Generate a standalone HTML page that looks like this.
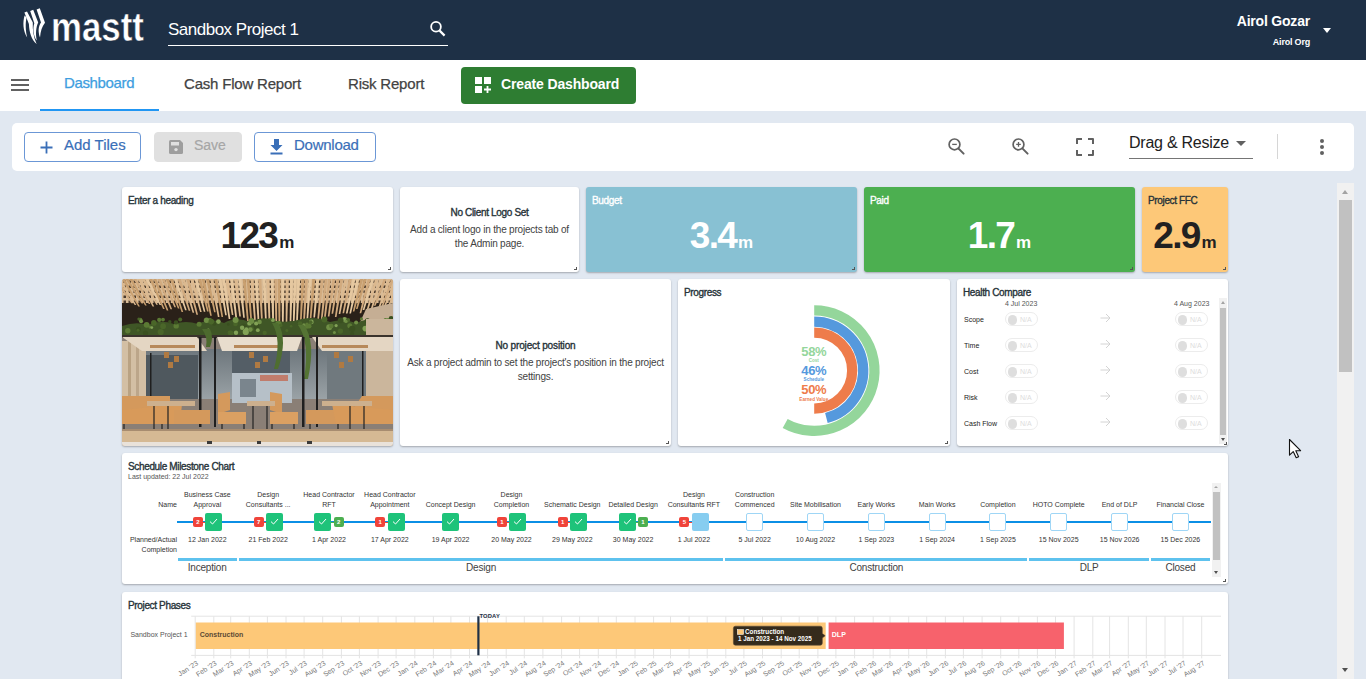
<!DOCTYPE html>
<html><head><meta charset="utf-8">
<style>
*{box-sizing:border-box;margin:0;padding:0}
html,body{width:1366px;height:679px;overflow:hidden;background:#e1e8f1;font-family:"Liberation Sans",sans-serif;color:#212121}
.a{position:absolute}
.nw{white-space:nowrap}
#hdr{left:0;top:0;width:1366px;height:60px;background:#1e3046}
#nav{left:0;top:60px;width:1366px;height:51px;background:#fff}
.tab{position:absolute;font-size:15px;color:#424242;white-space:nowrap;-webkit-text-stroke:0.25px currentColor}
#tb{left:12px;top:123px;width:1342px;height:48px;background:#fff;border-radius:5px}
.btn{position:absolute;top:9px;height:30px;border:1px solid #6b97d6;border-radius:4px;color:#3a6fb8;font-size:15px;-webkit-text-stroke:0.2px currentColor}
.tile{position:absolute;background:#fff;border-radius:3px;box-shadow:0 1px 2px rgba(0,0,0,.28)}
.tt{position:absolute;left:6px;top:8px;font-size:10px;font-weight:normal;-webkit-text-stroke:0.35px currentColor;letter-spacing:-0.35px;color:#263238;white-space:nowrap}
.rh{position:absolute;right:2px;bottom:2px;width:3.5px;height:3.5px;border-right:1.5px solid #555;border-bottom:1.5px solid #555}
.big{position:absolute;left:0;width:100%;text-align:center;font-weight:bold;white-space:nowrap}
.big b{font-size:37px;letter-spacing:-1.7px}
.big i{font-style:normal;font-size:17px;letter-spacing:0;margin-left:2px}
</style></head><body>
<!-- HEADER -->
<div id="hdr" class="a">
  <svg class="a" style="left:20px;top:6px" width="30" height="40" viewBox="0 0 30 40">
    <path d="M4.4 6.6 L7 5.4 L12.8 16.4 C12.4 24 13.6 31 16.6 38 C11.4 34 9.2 26 8.9 18 Z" fill="#fff"/>
    <path d="M4.6 9.5 C2.6 16 2.9 25 7.2 31.5 C5.6 25 5.2 17 6.6 11.5 Z" fill="#fff"/>
    <path d="M10.2 5 L13.2 3.8 L18.2 16.5 C16 21 15.4 28 16.8 34.6 C13.2 29.5 12.6 22 14.3 17.2 Z" fill="#fff"/>
    <path d="M16.6 3.4 L19.8 2.2 L25 16.8 C22 20.6 20.6 25 20 31.6 C18 26 18.2 20.5 21 16.6 Z" fill="#fff"/>
  </svg>
  <div class="a nw" style="left:51px;top:4.5px;font-size:40px;font-weight:bold;color:#fff;-webkit-text-stroke:0.5px #1e3046;transform:scaleX(0.87);transform-origin:0 0;letter-spacing:0">mastt</div>
  <div class="a nw" style="left:168px;top:20px;font-size:17px;color:#fff;letter-spacing:-0.5px">Sandbox Project 1</div>
  <div class="a" style="left:168px;top:45px;width:280px;height:1.3px;background:#fff"></div>
  <svg class="a" style="left:429px;top:21px" width="18" height="17" viewBox="0 0 18 17"><circle cx="7" cy="5.8" r="4.85" stroke="#fff" stroke-width="1.8" fill="none"/><path d="M10.6 9.6 L15.6 14.6" stroke="#fff" stroke-width="2.2"/></svg>
  <div class="a nw" style="right:56px;top:13px;font-size:14px;font-weight:bold;color:#fff;letter-spacing:-0.2px">Airol Gozar</div>
  <div class="a nw" style="right:56px;top:37px;font-size:9px;font-weight:bold;color:#fff;letter-spacing:-0.2px">Airol Org</div>
  <div class="a" style="left:1323px;top:28px;width:0;height:0;border-left:4.5px solid transparent;border-right:4.5px solid transparent;border-top:5px solid #fff"></div>
</div>
<!-- NAV -->
<div id="nav" class="a">
  <div class="a" style="left:11px;top:19px;width:18px;height:2px;background:#616161"></div>
  <div class="a" style="left:11px;top:24px;width:18px;height:2px;background:#616161"></div>
  <div class="a" style="left:11px;top:29px;width:18px;height:2px;background:#616161"></div>
  <div class="tab" style="left:64px;top:14px;color:#3d9ee0;letter-spacing:-0.35px">Dashboard</div>
  <div class="a" style="left:40px;top:48.7px;width:119px;height:2.2px;background:#2196f3"></div>
  <div class="tab" style="left:184px;top:15px;letter-spacing:-0.2px">Cash Flow Report</div>
  <div class="tab" style="left:348px;top:15px;letter-spacing:-0.2px">Risk Report</div>
  <div class="a" style="left:461px;top:7px;width:175px;height:37px;background:#2e7d32;border-radius:4px">
    <svg class="a" style="left:14px;top:10px" width="16" height="16" viewBox="0 0 16 16"><rect x="0" y="0" width="7" height="7" fill="#fff"/><rect x="9" y="0" width="7" height="7" fill="#fff"/><rect x="0" y="9" width="7" height="7" fill="#fff"/><path d="M12.5 9 V16 M9 12.5 H16" stroke="#fff" stroke-width="1.8"/></svg>
    <div class="a nw" style="left:40px;top:9px;font-size:14px;font-weight:bold;color:#fff;letter-spacing:-0.15px">Create Dashboard</div>
  </div>
</div>
<!-- TOOLBAR -->
<div id="tb" class="a">
  <div class="btn" style="left:12px;width:117px">
    <svg class="a" style="left:15px;top:8px" width="13" height="13" viewBox="0 0 13 13"><path d="M6.5 0.5 V12.5 M0.5 6.5 H12.5" stroke="#3a6fb8" stroke-width="1.8"/></svg>
    <div class="a nw" style="left:39px;top:3px;letter-spacing:0">Add Tiles</div>
  </div>
  <div class="btn" style="left:142px;width:88px;border-color:#e0e0e0;background:#e0e0e0;color:#a6a6a6">
    <svg class="a" style="left:13px;top:6px" width="16" height="16" viewBox="0 0 16 16"><path d="M1 2.5 Q1 1 2.5 1 H12 L15 4 V13.5 Q15 15 13.5 15 H2.5 Q1 15 1 13.5 Z" fill="#9e9e9e"/><rect x="3" y="3" width="8" height="3.5" fill="#e0e0e0"/><circle cx="8" cy="10.6" r="1.7" fill="#e0e0e0"/></svg>
    <div class="a nw" style="left:39px;top:4px;font-size:14px;letter-spacing:0">Save</div>
  </div>
  <div class="btn" style="left:242px;width:122px">
    <svg class="a" style="left:15px;top:6px" width="13" height="16" viewBox="0 0 13 16"><path d="M4 0 H9 V6 H12.5 L6.5 12 L0.5 6 H4 Z" fill="#3a6fb8"/><rect x="0.5" y="13.5" width="12" height="2" fill="#3a6fb8"/></svg>
    <div class="a nw" style="left:39px;top:3px;letter-spacing:-0.25px">Download</div>
  </div>
  <svg class="a" style="left:935px;top:15px" width="19" height="18" viewBox="0 0 19 18"><circle cx="7.5" cy="6.4" r="5.4" stroke="#616161" stroke-width="1.7" fill="none"/><path d="M11.6 10.6 L16.6 15.6" stroke="#616161" stroke-width="2" stroke-linecap="round"/><path d="M5.2 6.4 H9.8" stroke="#616161" stroke-width="1.3"/></svg>
  <svg class="a" style="left:999px;top:15px" width="19" height="18" viewBox="0 0 19 18"><circle cx="7.5" cy="6.4" r="5.4" stroke="#616161" stroke-width="1.7" fill="none"/><path d="M11.6 10.6 L16.6 15.6" stroke="#616161" stroke-width="2" stroke-linecap="round"/><path d="M5.2 6.4 H9.8 M7.5 4.1 V8.7" stroke="#616161" stroke-width="1.3"/></svg>
  <svg class="a" style="left:1064px;top:15px" width="19" height="18" viewBox="0 0 19 18"><path d="M1 6 V1 H6 M12 1 H17 V6 M17 12 V17 H12 M6 17 H1 V12" stroke="#616161" stroke-width="2" stroke-linejoin="round" fill="none"/></svg>
  <div class="a nw" style="left:1117px;top:11px;font-size:16px;color:#212121;letter-spacing:-0.25px">Drag &amp; Resize</div>
  <div class="a" style="left:1224px;top:18px;width:0;height:0;border-left:5px solid transparent;border-right:5px solid transparent;border-top:5px solid #616161"></div>
  <div class="a" style="left:1117px;top:35px;width:124px;height:1px;background:#757575"></div>
  <div class="a" style="left:1265px;top:11px;width:1px;height:25px;background:#d6d6d6"></div>
  <div class="a" style="left:1308px;top:16px;width:4px;height:4px;border-radius:2px;background:#616161"></div>
  <div class="a" style="left:1308px;top:22px;width:4px;height:4px;border-radius:2px;background:#616161"></div>
  <div class="a" style="left:1308px;top:28px;width:4px;height:4px;border-radius:2px;background:#616161"></div>
</div>
<!-- TILES -->
<div id="tiles">
  <!-- row 1 -->
  <div class="tile" style="left:122px;top:187px;width:271px;height:85px">
    <div class="tt">Enter a heading</div>
    <div class="big" style="top:28px;color:#212121"><b>123</b><i>m</i></div>
    <div class="rh"></div>
  </div>
  <div class="tile" style="left:400px;top:187px;width:179px;height:85px;text-align:center">
    <div class="a nw" style="left:0;width:100%;top:20px;font-size:10px;-webkit-text-stroke:0.35px #263238;letter-spacing:-0.33px;color:#263238">No Client Logo Set</div>
    <div class="a" style="left:0;width:100%;top:36px;font-size:10px;line-height:14px;letter-spacing:-0.2px;color:#424242">Add a client logo in the projects tab of<br>the Admin page.</div>
    <div class="rh"></div>
  </div>
  <div class="tile" style="left:586px;top:187px;width:271px;height:85px;background:#88c1d3">
    <div class="tt" style="color:#fff">Budget</div>
    <div class="big" style="top:28px;color:#fff"><b>3.4</b><i>m</i></div>
    <div class="rh"></div>
  </div>
  <div class="tile" style="left:864px;top:187px;width:271px;height:85px;background:#4caf50">
    <div class="tt" style="color:#fff">Paid</div>
    <div class="big" style="top:28px;color:#fff"><b>1.7</b><i>m</i></div>
    <div class="rh"></div>
  </div>
  <div class="tile" style="left:1142px;top:187px;width:86px;height:85px;background:#fdc878">
    <div class="tt">Project FFC</div>
    <div class="big" style="top:28px;color:#212121"><b>2.9</b><i>m</i></div>
    <div class="rh"></div>
  </div>
  <!-- row 2 -->
  <div class="tile" style="left:122px;top:279px;width:271px;height:167px;overflow:hidden" id="photo"><svg width="271" height="167" viewBox="0 0 271 167" style="display:block">
<defs>
<linearGradient id="ceil" x1="0" y1="0" x2="0" y2="1"><stop offset="0" stop-color="#cfae88"/><stop offset="1" stop-color="#b98f63"/></linearGradient>
<linearGradient id="win" x1="0" y1="0" x2="0" y2="1"><stop offset="0" stop-color="#6d767c"/><stop offset="1" stop-color="#9aa2a6"/></linearGradient>
<pattern id="slat" width="5" height="10" patternUnits="userSpaceOnUse"><rect width="5" height="10" fill="#d9b68c"/><rect x="3.4" width="1.6" height="10" fill="#6b5038"/></pattern>
<pattern id="grid" width="5" height="5" patternUnits="userSpaceOnUse"><rect width="5" height="5" fill="#d8bb97"/><rect x="1.5" y="1.5" width="2.5" height="2.5" fill="#4a3a2c"/></pattern>
</defs>
<rect width="271" height="167" fill="#8a7f76"/>
<!-- ceiling -->
<rect x="0" y="0" width="271" height="30" fill="url(#grid)"/>
<rect x="0" y="24" width="271" height="24" fill="#2a2119"/>
<path d="M-8.0 0 L-5.0 0 L10.9 24.2 L9.3 24.2 Z" fill="#d2ab7f"/>
<path d="M-4.2 0 L-1.2 0 L14.3 26.0 L12.7 26.0 Z" fill="#dcb98f"/>
<path d="M-0.2 0 L2.8 0 L17.9 27.5 L16.3 27.5 Z" fill="#c9a070"/>
<path d="M3.4 0 L6.4 0 L21.2 24.6 L19.6 24.6 Z" fill="#c9a070"/>
<path d="M7.4 0 L10.4 0 L24.7 26.6 L23.1 26.6 Z" fill="#c9a070"/>
<path d="M11.4 0 L14.4 0 L28.4 25.1 L26.8 25.1 Z" fill="#d2ab7f"/>
<path d="M15.7 0 L18.7 0 L32.2 27.5 L30.6 27.5 Z" fill="#dcb98f"/>
<path d="M19.8 0 L22.8 0 L35.9 25.7 L34.3 25.7 Z" fill="#dcb98f"/>
<path d="M23.5 0 L26.5 0 L39.2 26.0 L37.6 26.0 Z" fill="#e6c8a0"/>
<path d="M27.3 0 L30.3 0 L42.7 29.9 L41.1 29.9 Z" fill="#c9a070"/>
<path d="M31.4 0 L34.4 0 L46.4 31.4 L44.8 31.4 Z" fill="#c9a070"/>
<path d="M35.6 0 L38.6 0 L50.1 30.2 L48.5 30.2 Z" fill="#d2ab7f"/>
<path d="M39.8 0 L42.8 0 L54.0 28.3 L52.4 28.3 Z" fill="#d2ab7f"/>
<path d="M43.7 0 L46.7 0 L57.5 29.6 L55.9 29.6 Z" fill="#c9a070"/>
<path d="M47.9 0 L50.9 0 L61.2 33.1 L59.6 33.1 Z" fill="#c9a070"/>
<path d="M51.8 0 L54.8 0 L64.7 31.2 L63.1 31.2 Z" fill="#e6c8a0"/>
<path d="M55.8 0 L58.8 0 L68.3 31.8 L66.7 31.8 Z" fill="#d2ab7f"/>
<path d="M60.1 0 L63.1 0 L72.2 33.7 L70.6 33.7 Z" fill="#dcb98f"/>
<path d="M64.3 0 L67.3 0 L76.0 35.8 L74.4 35.8 Z" fill="#d2ab7f"/>
<path d="M68.4 0 L71.4 0 L79.7 32.9 L78.1 32.9 Z" fill="#dcb98f"/>
<path d="M72.5 0 L75.5 0 L83.4 32.8 L81.8 32.8 Z" fill="#e6c8a0"/>
<path d="M76.2 0 L79.2 0 L86.7 32.6 L85.1 32.6 Z" fill="#c9a070"/>
<path d="M79.7 0 L82.7 0 L89.8 36.7 L88.2 36.7 Z" fill="#c9a070"/>
<path d="M84.0 0 L87.0 0 L93.7 33.3 L92.1 33.3 Z" fill="#c9a070"/>
<path d="M88.2 0 L91.2 0 L97.5 38.1 L95.9 38.1 Z" fill="#dcb98f"/>
<path d="M92.2 0 L95.2 0 L101.1 38.0 L99.5 38.0 Z" fill="#c9a070"/>
<path d="M96.3 0 L99.3 0 L104.8 36.3 L103.2 36.3 Z" fill="#e6c8a0"/>
<path d="M100.2 0 L103.2 0 L108.3 40.1 L106.7 40.1 Z" fill="#e6c8a0"/>
<path d="M103.6 0 L106.6 0 L111.4 36.1 L109.8 36.1 Z" fill="#dcb98f"/>
<path d="M108.0 0 L111.0 0 L115.3 40.9 L113.7 40.9 Z" fill="#e6c8a0"/>
<path d="M112.0 0 L115.0 0 L118.9 37.4 L117.3 37.4 Z" fill="#dcb98f"/>
<path d="M116.4 0 L119.4 0 L122.8 38.8 L121.2 38.8 Z" fill="#e6c8a0"/>
<path d="M120.7 0 L123.7 0 L126.7 42.1 L125.1 42.1 Z" fill="#c9a070"/>
<path d="M124.5 0 L127.5 0 L130.1 42.4 L128.5 42.4 Z" fill="#c9a070"/>
<path d="M128.5 0 L131.5 0 L133.8 41.6 L132.2 41.6 Z" fill="#dcb98f"/>
<path d="M132.6 0 L135.6 0 L137.4 43.8 L135.8 43.8 Z" fill="#e6c8a0"/>
<path d="M136.4 0 L139.4 0 L140.8 43.1 L139.2 43.1 Z" fill="#d2ab7f"/>
<path d="M140.7 0 L143.7 0 L144.7 42.2 L143.1 42.2 Z" fill="#e6c8a0"/>
<path d="M144.6 0 L147.6 0 L148.3 43.3 L146.7 43.3 Z" fill="#dcb98f"/>
<path d="M148.8 0 L151.8 0 L152.0 46.0 L150.4 46.0 Z" fill="#e6c8a0"/>
<path d="M152.2 0 L155.2 0 L155.1 44.5 L153.5 44.5 Z" fill="#d2ab7f"/>
<path d="M155.7 0 L158.7 0 L158.2 45.0 L156.6 45.0 Z" fill="#c9a070"/>
<path d="M159.5 0 L162.5 0 L161.6 46.9 L160.0 46.9 Z" fill="#e6c8a0"/>
<path d="M163.6 0 L166.6 0 L165.3 42.9 L163.7 42.9 Z" fill="#dcb98f"/>
<path d="M168.0 0 L171.0 0 L169.3 42.6 L167.7 42.6 Z" fill="#e6c8a0"/>
<path d="M171.6 0 L174.6 0 L172.5 44.2 L170.9 44.2 Z" fill="#e6c8a0"/>
<path d="M175.2 0 L178.2 0 L175.8 42.2 L174.2 42.2 Z" fill="#e6c8a0"/>
<path d="M179.4 0 L182.4 0 L179.6 41.9 L178.0 41.9 Z" fill="#c9a070"/>
<path d="M182.9 0 L185.9 0 L182.7 44.0 L181.1 44.0 Z" fill="#d2ab7f"/>
<path d="M186.6 0 L189.6 0 L186.1 40.4 L184.5 40.4 Z" fill="#e6c8a0"/>
<path d="M190.3 0 L193.3 0 L189.4 39.6 L187.8 39.6 Z" fill="#c9a070"/>
<path d="M194.3 0 L197.3 0 L193.0 38.5 L191.4 38.5 Z" fill="#e6c8a0"/>
<path d="M198.7 0 L201.7 0 L196.9 40.7 L195.3 40.7 Z" fill="#d2ab7f"/>
<path d="M202.5 0 L205.5 0 L200.4 40.9 L198.8 40.9 Z" fill="#d2ab7f"/>
<path d="M206.0 0 L209.0 0 L203.5 39.7 L201.9 39.7 Z" fill="#d2ab7f"/>
<path d="M210.3 0 L213.3 0 L207.4 37.6 L205.8 37.6 Z" fill="#d2ab7f"/>
<path d="M214.5 0 L217.5 0 L211.1 34.8 L209.5 34.8 Z" fill="#d2ab7f"/>
<path d="M218.2 0 L221.2 0 L214.5 38.1 L212.9 38.1 Z" fill="#d2ab7f"/>
<path d="M222.4 0 L225.4 0 L218.3 34.9 L216.7 34.9 Z" fill="#dcb98f"/>
<path d="M226.7 0 L229.7 0 L222.1 34.3 L220.5 34.3 Z" fill="#d2ab7f"/>
<path d="M230.5 0 L233.5 0 L225.5 34.5 L223.9 34.5 Z" fill="#e6c8a0"/>
<path d="M234.3 0 L237.3 0 L229.0 34.4 L227.4 34.4 Z" fill="#e6c8a0"/>
<path d="M238.2 0 L241.2 0 L232.4 32.6 L230.8 32.6 Z" fill="#c9a070"/>
<path d="M241.7 0 L244.7 0 L235.6 30.0 L234.0 30.0 Z" fill="#c9a070"/>
<path d="M245.7 0 L248.7 0 L239.2 34.2 L237.6 34.2 Z" fill="#d2ab7f"/>
<path d="M249.1 0 L252.1 0 L242.3 31.0 L240.7 31.0 Z" fill="#e6c8a0"/>
<path d="M253.1 0 L256.1 0 L245.8 32.5 L244.2 32.5 Z" fill="#dcb98f"/>
<path d="M257.3 0 L260.3 0 L249.7 32.2 L248.1 32.2 Z" fill="#dcb98f"/>
<path d="M261.5 0 L264.5 0 L253.5 26.8 L251.9 26.8 Z" fill="#d2ab7f"/>
<path d="M265.8 0 L268.8 0 L257.3 30.4 L255.7 30.4 Z" fill="#dcb98f"/>
<path d="M269.2 0 L272.2 0 L260.4 29.0 L258.8 29.0 Z" fill="#d2ab7f"/>
<path d="M273.1 0 L276.1 0 L263.9 26.2 L262.3 26.2 Z" fill="#dcb98f"/>
<path d="M277.1 0 L280.1 0 L267.5 27.1 L265.9 27.1 Z" fill="#dcb98f"/>
<path d="M244 30 L271 24 V48 H236 Z" fill="#c5ae94"/>
<!-- foliage -->
<path d="M0 47 Q14 42 26 46 Q38 40 52 45 Q64 41 76 45 Q90 38 102 44 Q114 37 128 43 Q142 36 154 42 Q168 44 180 40 Q194 37 208 43 Q222 39 234 44 Q250 37 262 42 L271 41 V57 H0 Z" fill="#3f5626"/>
<circle cx="87.8" cy="41.4" r="2.5" fill="#5b7a34"/>
<circle cx="222.6" cy="40.5" r="2.4" fill="#82a256"/>
<circle cx="58.2" cy="40.4" r="2.0" fill="#4a6629"/>
<circle cx="24.6" cy="45.8" r="2.9" fill="#5b7a34"/>
<circle cx="256.8" cy="49.1" r="2.4" fill="#5b7a34"/>
<circle cx="156.4" cy="45.3" r="3.2" fill="#5b7a34"/>
<circle cx="150.9" cy="41.1" r="2.0" fill="#82a256"/>
<circle cx="31.9" cy="43.9" r="2.8" fill="#4a6629"/>
<circle cx="27.9" cy="48.1" r="1.6" fill="#5b7a34"/>
<circle cx="148.4" cy="40.0" r="1.3" fill="#4a6629"/>
<circle cx="134.5" cy="47.5" r="2.8" fill="#3a5020"/>
<circle cx="158.7" cy="46.3" r="1.8" fill="#4a6629"/>
<circle cx="189.4" cy="42.9" r="2.3" fill="#82a256"/>
<circle cx="134.2" cy="44.5" r="2.1" fill="#82a256"/>
<circle cx="265.6" cy="40.9" r="2.0" fill="#6f8f45"/>
<circle cx="41.2" cy="46.8" r="1.3" fill="#5b7a34"/>
<circle cx="207.2" cy="48.2" r="3.0" fill="#6f8f45"/>
<circle cx="92.2" cy="44.6" r="2.2" fill="#3a5020"/>
<circle cx="18.6" cy="40.5" r="1.7" fill="#5b7a34"/>
<circle cx="16.4" cy="50.2" r="2.5" fill="#3a5020"/>
<circle cx="77.1" cy="45.2" r="2.5" fill="#5b7a34"/>
<circle cx="254.9" cy="44.7" r="2.4" fill="#3a5020"/>
<circle cx="16.0" cy="51.3" r="1.5" fill="#4a6629"/>
<circle cx="107.8" cy="53.7" r="2.2" fill="#4a6629"/>
<circle cx="121.7" cy="47.8" r="3.0" fill="#3a5020"/>
<circle cx="234.1" cy="43.5" r="2.0" fill="#6f8f45"/>
<circle cx="185.0" cy="45.1" r="1.7" fill="#5b7a34"/>
<circle cx="47.8" cy="42.7" r="1.7" fill="#3a5020"/>
<circle cx="225.2" cy="41.9" r="1.8" fill="#4a6629"/>
<circle cx="113.5" cy="44.9" r="2.3" fill="#4a6629"/>
<circle cx="187.1" cy="47.2" r="2.4" fill="#5b7a34"/>
<circle cx="123.8" cy="52.9" r="3.1" fill="#82a256"/>
<circle cx="106.3" cy="45.4" r="1.4" fill="#3a5020"/>
<circle cx="16.9" cy="40.1" r="1.6" fill="#4a6629"/>
<circle cx="29.8" cy="48.6" r="1.4" fill="#82a256"/>
<circle cx="41.0" cy="40.6" r="1.9" fill="#5b7a34"/>
<circle cx="19.1" cy="42.3" r="2.0" fill="#6f8f45"/>
<circle cx="258.9" cy="48.6" r="2.1" fill="#5b7a34"/>
<circle cx="230.1" cy="54.9" r="2.1" fill="#3a5020"/>
<circle cx="84.5" cy="41.3" r="2.7" fill="#6f8f45"/>
<circle cx="129.7" cy="50.1" r="2.2" fill="#4a6629"/>
<circle cx="257.7" cy="47.5" r="1.5" fill="#82a256"/>
<circle cx="247.7" cy="51.1" r="1.8" fill="#5b7a34"/>
<circle cx="188.7" cy="43.2" r="1.9" fill="#4a6629"/>
<circle cx="96.4" cy="42.6" r="2.3" fill="#82a256"/>
<circle cx="89.3" cy="42.6" r="2.8" fill="#4a6629"/>
<circle cx="218.4" cy="52.1" r="2.7" fill="#4a6629"/>
<circle cx="54.2" cy="46.9" r="2.7" fill="#5b7a34"/>
<circle cx="214.1" cy="46.6" r="1.6" fill="#82a256"/>
<circle cx="259.2" cy="46.2" r="3.1" fill="#6f8f45"/>
<circle cx="258.8" cy="44.8" r="1.6" fill="#4a6629"/>
<circle cx="127.4" cy="44.4" r="2.2" fill="#82a256"/>
<circle cx="227.8" cy="46.7" r="2.5" fill="#5b7a34"/>
<circle cx="226.2" cy="40.9" r="2.0" fill="#4a6629"/>
<circle cx="129.5" cy="41.9" r="2.8" fill="#6f8f45"/>
<circle cx="23.5" cy="54.1" r="2.6" fill="#3a5020"/>
<circle cx="108.8" cy="54.1" r="2.6" fill="#4a6629"/>
<circle cx="269.1" cy="39.4" r="2.4" fill="#3a5020"/>
<circle cx="218.6" cy="41.3" r="2.9" fill="#3a5020"/>
<circle cx="178.1" cy="44.6" r="2.3" fill="#4a6629"/>
<circle cx="5.8" cy="51.8" r="2.7" fill="#5b7a34"/>
<circle cx="142.7" cy="53.9" r="2.1" fill="#4a6629"/>
<circle cx="223.9" cy="42.4" r="1.7" fill="#6f8f45"/>
<circle cx="135.8" cy="51.2" r="1.9" fill="#82a256"/>
<circle cx="113.6" cy="41.1" r="3.0" fill="#6f8f45"/>
<circle cx="243.3" cy="49.6" r="2.8" fill="#82a256"/>
<circle cx="114.0" cy="53.7" r="2.2" fill="#82a256"/>
<circle cx="41.1" cy="47.2" r="2.9" fill="#4a6629"/>
<circle cx="164.9" cy="51.4" r="1.5" fill="#4a6629"/>
<circle cx="128.3" cy="50.6" r="2.3" fill="#6f8f45"/>
<circle cx="184.9" cy="47.5" r="2.2" fill="#5b7a34"/>
<circle cx="239.4" cy="39.9" r="1.6" fill="#5b7a34"/>
<circle cx="209.3" cy="47.1" r="2.3" fill="#5b7a34"/>
<circle cx="120.1" cy="48.8" r="2.2" fill="#82a256"/>
<circle cx="54.0" cy="43.4" r="2.2" fill="#3a5020"/>
<circle cx="137.6" cy="43.0" r="2.2" fill="#6f8f45"/>
<circle cx="250.1" cy="53.3" r="1.6" fill="#3a5020"/>
<circle cx="37.2" cy="40.9" r="2.1" fill="#5b7a34"/>
<circle cx="181.9" cy="45.9" r="1.6" fill="#6f8f45"/>
<circle cx="212.4" cy="53.4" r="1.5" fill="#6f8f45"/>
<circle cx="38.7" cy="53.1" r="3.1" fill="#4a6629"/>
<circle cx="202.4" cy="40.5" r="3.0" fill="#4a6629"/>
<circle cx="268.3" cy="52.3" r="1.5" fill="#3a5020"/>
<circle cx="269.4" cy="45.5" r="2.0" fill="#6f8f45"/>
<circle cx="86.3" cy="50.6" r="1.2" fill="#82a256"/>
<circle cx="124.3" cy="50.3" r="2.0" fill="#82a256"/>
<circle cx="169.1" cy="47.2" r="1.3" fill="#4a6629"/>
<circle cx="263.3" cy="40.7" r="1.7" fill="#5b7a34"/>
<circle cx="245.5" cy="41.9" r="2.7" fill="#3a5020"/>
<circle cx="230.2" cy="49.8" r="3.1" fill="#3a5020"/>
<!-- interior -->
<rect x="0" y="70" width="271" height="50" fill="url(#win)"/>
<rect x="0" y="62" width="24" height="65" fill="#d3bfa4"/>
<rect x="6" y="62" width="3" height="65" fill="#b9a283"/><rect x="14" y="62" width="3" height="65" fill="#bca68a"/>
<rect x="24" y="76" width="52" height="44" fill="#4f585e"/>
<rect x="110" y="72" width="58" height="24" fill="#545e66"/>
<rect x="110" y="94" width="60" height="30" fill="#b6c0c8"/>
<rect x="118" y="100" width="16" height="18" fill="#7a858d"/><rect x="138" y="96" width="28" height="6" fill="#c07c6c"/>
<rect x="205" y="72" width="40" height="48" fill="#70797e"/>
<rect x="244" y="40" width="27" height="80" fill="#cbb69c"/>
<!-- canopy -->
<rect x="0" y="56" width="271" height="3" fill="#3a332c"/>
<path d="M0 58 H75 L85 72 H20 Z" fill="#e4d6c3"/>
<path d="M95 58 H180 L175 72 H100 Z" fill="#e8ddcd"/>
<path d="M190 58 H271 V72 L200 72 Z" fill="#e4d6c3"/>
<rect x="28" y="66" width="45" height="3" fill="#b7895a"/><rect x="112" y="66" width="48" height="3" fill="#b7895a"/><rect x="200" y="66" width="46" height="3" fill="#b7895a"/>
<!-- lamps -->
<g fill="#b07a42"><rect x="42" y="73" width="5" height="6"/><rect x="52" y="77" width="5" height="6"/><rect x="46" y="83" width="5" height="6"/>
<rect x="127" y="73" width="5" height="6"/><rect x="141" y="77" width="5" height="6"/><rect x="133" y="83" width="5" height="6"/>
<rect x="212" y="73" width="5" height="6"/><rect x="226" y="77" width="5" height="6"/><rect x="217" y="83" width="5" height="6"/></g>
<!-- vines -->
<path d="M80 50 Q86 58 84 68 L88 68 Q92 58 88 50 Z" fill="#4d6a2e"/>
<path d="M150 44 Q160 60 152 90 L156 90 Q166 60 156 44 Z" fill="#4f6e30"/>
<path d="M176 46 Q188 62 182 100 L186 100 Q194 62 182 46 Z" fill="#557434"/>
<!-- pillars -->
<g fill="#1f1f1f"><rect x="77" y="58" width="2.5" height="90"/><rect x="92" y="58" width="2" height="90"/><rect x="180" y="58" width="2.5" height="90"/><rect x="194" y="58" width="2" height="90"/><rect x="28" y="74" width="1.5" height="45"/><rect x="240" y="72" width="1.5" height="48"/></g>
<g transform="translate(0 5)"><!-- benches -->
<g fill="#d4995c">
<path d="M0 112 H48 V124 L0 128 Z"/><path d="M0 126 L60 120 L58 140 H0 Z" fill="#d89a5a"/>
<path d="M52 126 H88 V140 H52 Z"/>
<path d="M96 110 L108 108 V126 L96 130 Z"/><path d="M96 128 H124 V140 H96 Z" fill="#dba062"/>
<path d="M148 108 L160 110 V130 L148 126 Z"/><path d="M148 128 H176 V140 H148 Z" fill="#dba062"/>
<path d="M184 126 H220 V140 H184 Z"/>
<path d="M240 112 H271 V128 L232 124 Z"/><path d="M210 120 L271 126 V140 H214 Z" fill="#d89a5a"/>
</g>
<g fill="#cdb08e"><rect x="25" y="117" width="48" height="5"/><rect x="125" y="117" width="28" height="5"/><rect x="200" y="117" width="50" height="5"/></g>
<g stroke="#222" stroke-width="1.2" fill="none"><path d="M32 122 V147 H46 V122"/><path d="M131 122 V147 H145 V122"/><path d="M228 122 V147 H242 V122"/><path d="M2 140 V148 H40 V140"/><path d="M100 140 V148 H122 V140"/><path d="M150 140 V148 H172 V140"/><path d="M188 140 V148 H216 V140"/></g>
</g>
<!-- floor -->
<rect x="0" y="151" width="271" height="16" fill="#d5b994"/>
<rect x="0" y="150" width="271" height="2" fill="#a78c70"/>
<rect x="0" y="163" width="271" height="4" fill="#e9e2da"/>
<g fill="#3a3a3a"><rect x="85" y="162" width="5" height="3"/><rect x="135" y="162" width="4" height="3"/><rect x="185" y="162" width="5" height="3"/></g>
</svg></div>
  <div class="tile" style="left:400px;top:279px;width:271px;height:167px;text-align:center">
    <div class="a nw" style="left:0;width:100%;top:61px;font-size:10px;-webkit-text-stroke:0.35px #263238;letter-spacing:-0.15px;color:#263238">No project position</div>
    <div class="a" style="left:0;width:100%;top:77px;font-size:10px;line-height:14px;letter-spacing:-0.19px;color:#424242">Ask a project admin to set the project's position in the project<br>settings.</div>
    <div class="rh"></div>
  </div>
  <div class="tile" style="left:678px;top:279px;width:272px;height:167px" id="progress">
    <svg class="a" style="left:0;top:0" width="272" height="167" viewBox="0 0 272 167">
<path d="M136.2 31.35 A60.25 60.25 0 1 1 107.17 144.40" stroke="#94d69b" stroke-width="10.3" fill="none"/>
<path d="M136.2 42.60 A49 49 0 0 1 148.39 139.06" stroke="#5599dd" stroke-width="10.3" fill="none"/>
<path d="M136.2 53.60 A38 38 0 0 1 136.20 129.60" stroke="#ee7c4b" stroke-width="10.3" fill="none"/>
<g font-family="Liberation Sans" font-weight="bold" text-anchor="middle">
<text x="135.8" y="76.6" font-size="13" fill="#94d69b" letter-spacing="-0.3">58%</text>
<text x="135.8" y="83.4" font-size="4.6" fill="#94d69b">Cost</text>
<text x="135.8" y="95.6" font-size="13" fill="#5599dd" letter-spacing="-0.3">46%</text>
<text x="135.8" y="101.8" font-size="4.6" fill="#5599dd">Schedule</text>
<text x="135.8" y="114.8" font-size="13" fill="#ee7c4b" letter-spacing="-0.3">50%</text>
<text x="135.8" y="121.6" font-size="4.6" fill="#ee7c4b">Earned Value</text>
</g></svg>
    <div class="tt">Progress</div>
    <div class="rh"></div>
  </div>
  <div class="tile" style="left:957px;top:279px;width:271px;height:167px" id="health">
    <div class="tt">Health Compare</div>
    <div class="a nw" style="left:48px;top:21px;font-size:7px;color:#555">4 Jul 2023</div><div class="a nw" style="left:217px;top:21px;font-size:7px;color:#555">4 Aug 2023</div><div class="a nw" style="left:7px;top:37.2px;font-size:7px;color:#222">Scope</div><div class="a" style="left:47.5px;top:33.4px;width:33px;height:14px;border:1px solid #ececec;border-radius:7px"><div class="a" style="left:2px;top:1.5px;width:9.8px;height:9.8px;border-radius:50%;background:#dedede"></div><div class="a nw" style="left:14.5px;top:3px;font-size:7px;color:#dcdcdc">N/A</div></div><div class="a" style="left:217.5px;top:33.4px;width:33px;height:14px;border:1px solid #ececec;border-radius:7px"><div class="a" style="left:2px;top:1.5px;width:9.8px;height:9.8px;border-radius:50%;background:#dedede"></div><div class="a nw" style="left:14.5px;top:3px;font-size:7px;color:#dcdcdc">N/A</div></div><svg class="a" style="left:143px;top:33.9px" width="11" height="10" viewBox="0 0 11 10"><path d="M0.5 5 H10 M6 1 L10 5 L6 9" stroke="#cfcfcf" stroke-width="0.9" fill="none"/></svg><div class="a nw" style="left:7px;top:63.2px;font-size:7px;color:#222">Time</div><div class="a" style="left:47.5px;top:59.4px;width:33px;height:14px;border:1px solid #ececec;border-radius:7px"><div class="a" style="left:2px;top:1.5px;width:9.8px;height:9.8px;border-radius:50%;background:#dedede"></div><div class="a nw" style="left:14.5px;top:3px;font-size:7px;color:#dcdcdc">N/A</div></div><div class="a" style="left:217.5px;top:59.4px;width:33px;height:14px;border:1px solid #ececec;border-radius:7px"><div class="a" style="left:2px;top:1.5px;width:9.8px;height:9.8px;border-radius:50%;background:#dedede"></div><div class="a nw" style="left:14.5px;top:3px;font-size:7px;color:#dcdcdc">N/A</div></div><svg class="a" style="left:143px;top:59.9px" width="11" height="10" viewBox="0 0 11 10"><path d="M0.5 5 H10 M6 1 L10 5 L6 9" stroke="#cfcfcf" stroke-width="0.9" fill="none"/></svg><div class="a nw" style="left:7px;top:89.2px;font-size:7px;color:#222">Cost</div><div class="a" style="left:47.5px;top:85.4px;width:33px;height:14px;border:1px solid #ececec;border-radius:7px"><div class="a" style="left:2px;top:1.5px;width:9.8px;height:9.8px;border-radius:50%;background:#dedede"></div><div class="a nw" style="left:14.5px;top:3px;font-size:7px;color:#dcdcdc">N/A</div></div><div class="a" style="left:217.5px;top:85.4px;width:33px;height:14px;border:1px solid #ececec;border-radius:7px"><div class="a" style="left:2px;top:1.5px;width:9.8px;height:9.8px;border-radius:50%;background:#dedede"></div><div class="a nw" style="left:14.5px;top:3px;font-size:7px;color:#dcdcdc">N/A</div></div><svg class="a" style="left:143px;top:85.9px" width="11" height="10" viewBox="0 0 11 10"><path d="M0.5 5 H10 M6 1 L10 5 L6 9" stroke="#cfcfcf" stroke-width="0.9" fill="none"/></svg><div class="a nw" style="left:7px;top:115.2px;font-size:7px;color:#222">Risk</div><div class="a" style="left:47.5px;top:111.4px;width:33px;height:14px;border:1px solid #ececec;border-radius:7px"><div class="a" style="left:2px;top:1.5px;width:9.8px;height:9.8px;border-radius:50%;background:#dedede"></div><div class="a nw" style="left:14.5px;top:3px;font-size:7px;color:#dcdcdc">N/A</div></div><div class="a" style="left:217.5px;top:111.4px;width:33px;height:14px;border:1px solid #ececec;border-radius:7px"><div class="a" style="left:2px;top:1.5px;width:9.8px;height:9.8px;border-radius:50%;background:#dedede"></div><div class="a nw" style="left:14.5px;top:3px;font-size:7px;color:#dcdcdc">N/A</div></div><svg class="a" style="left:143px;top:111.9px" width="11" height="10" viewBox="0 0 11 10"><path d="M0.5 5 H10 M6 1 L10 5 L6 9" stroke="#cfcfcf" stroke-width="0.9" fill="none"/></svg><div class="a nw" style="left:7px;top:141.2px;font-size:7px;color:#222">Cash Flow</div><div class="a" style="left:47.5px;top:137.4px;width:33px;height:14px;border:1px solid #ececec;border-radius:7px"><div class="a" style="left:2px;top:1.5px;width:9.8px;height:9.8px;border-radius:50%;background:#dedede"></div><div class="a nw" style="left:14.5px;top:3px;font-size:7px;color:#dcdcdc">N/A</div></div><div class="a" style="left:217.5px;top:137.4px;width:33px;height:14px;border:1px solid #ececec;border-radius:7px"><div class="a" style="left:2px;top:1.5px;width:9.8px;height:9.8px;border-radius:50%;background:#dedede"></div><div class="a nw" style="left:14.5px;top:3px;font-size:7px;color:#dcdcdc">N/A</div></div><svg class="a" style="left:143px;top:137.9px" width="11" height="10" viewBox="0 0 11 10"><path d="M0.5 5 H10 M6 1 L10 5 L6 9" stroke="#cfcfcf" stroke-width="0.9" fill="none"/></svg><div class="a" style="left:262px;top:19px;width:8px;height:146px;background:#f1f1f1"></div><div class="a" style="left:263px;top:29px;width:6px;height:127px;background:#c1c1c1"></div><div class="a" style="left:264px;top:22px;width:0;height:0;border-left:2.5px solid transparent;border-right:2.5px solid transparent;border-bottom:3px solid #a3a3a3"></div><div class="a" style="left:264px;top:159px;width:0;height:0;border-left:2.5px solid transparent;border-right:2.5px solid transparent;border-top:3px solid #505050"></div><div class="rh" style="right:1px;bottom:1px;width:3px;height:3px;border-width:1px"></div>
  </div>
  <!-- row 3 -->
  <div class="tile" style="left:122px;top:453px;width:1106px;height:131px" id="sched">
    <div class="tt">Schedule Milestone Chart</div>
    <div class="a nw" style="left:6px;top:20px;font-size:7px;color:#555">Last updated: 22 Jul 2022</div><div class="a nw" style="right:1051px;top:48px;font-size:7px;color:#333;text-align:right">Name</div><div class="a nw" style="right:1051px;top:82px;font-size:7px;color:#333;text-align:right;line-height:9.5px">Planned/Actual<br>Completion</div><div class="a" style="left:55px;top:68px;width:1033.8px;height:2.4px;background:#0b8fe5"></div><div class="a nw" style="left:55.4px;width:60px;text-align:center;top:37px;font-size:7px;line-height:10.3px;color:#333">Business Case<br>Approval</div><div class="a nw" style="left:55.4px;width:60px;text-align:center;top:82.8px;font-size:7px;color:#333">12 Jan 2022</div><div class="a" style="left:79.8px;top:68.5px;width:4px;height:1.6px;background:#f0443a"></div><div class="a" style="left:70.8px;top:64.3px;width:10px;height:10px;border-radius:2px;background:#f0443a;color:#fff;font-size:6px;font-weight:bold;text-align:center;line-height:10px">2</div><div class="a" style="left:83.1px;top:60.4px;width:17px;height:17.5px;border-radius:2px;background:#1ec37a"><svg class="a" style="left:4px;top:5px" width="9" height="7" viewBox="0 0 9 7"><path d="M1 3.6 L3.5 6 L8 1" stroke="#fff" stroke-width="1" fill="none"/></svg></div><div class="a nw" style="left:116.2px;width:60px;text-align:center;top:37px;font-size:7px;line-height:10.3px;color:#333">Design<br>Consultants ...</div><div class="a nw" style="left:116.2px;width:60px;text-align:center;top:82.8px;font-size:7px;color:#333">21 Feb 2022</div><div class="a" style="left:140.6px;top:68.5px;width:4px;height:1.6px;background:#f0443a"></div><div class="a" style="left:131.6px;top:64.3px;width:10px;height:10px;border-radius:2px;background:#f0443a;color:#fff;font-size:6px;font-weight:bold;text-align:center;line-height:10px">7</div><div class="a" style="left:143.9px;top:60.4px;width:17px;height:17.5px;border-radius:2px;background:#1ec37a"><svg class="a" style="left:4px;top:5px" width="9" height="7" viewBox="0 0 9 7"><path d="M1 3.6 L3.5 6 L8 1" stroke="#fff" stroke-width="1" fill="none"/></svg></div><div class="a nw" style="left:177.0px;width:60px;text-align:center;top:37px;font-size:7px;line-height:10.3px;color:#333">Head Contractor<br>RFT</div><div class="a nw" style="left:177.0px;width:60px;text-align:center;top:82.8px;font-size:7px;color:#333">1 Apr 2022</div><div class="a" style="left:208.7px;top:68.5px;width:4px;height:1.6px;background:#4caf50"></div><div class="a" style="left:211.7px;top:64.3px;width:10px;height:10px;border-radius:2px;background:#4caf50;color:#fff;font-size:6px;font-weight:bold;text-align:center;line-height:10px">2</div><div class="a" style="left:192.4px;top:60.4px;width:17px;height:17.5px;border-radius:2px;background:#1ec37a"><svg class="a" style="left:4px;top:5px" width="9" height="7" viewBox="0 0 9 7"><path d="M1 3.6 L3.5 6 L8 1" stroke="#fff" stroke-width="1" fill="none"/></svg></div><div class="a nw" style="left:237.8px;width:60px;text-align:center;top:37px;font-size:7px;line-height:10.3px;color:#333">Head Contractor<br>Appointment</div><div class="a nw" style="left:237.8px;width:60px;text-align:center;top:82.8px;font-size:7px;color:#333">17 Apr 2022</div><div class="a" style="left:262.2px;top:68.5px;width:4px;height:1.6px;background:#f0443a"></div><div class="a" style="left:253.2px;top:64.3px;width:10px;height:10px;border-radius:2px;background:#f0443a;color:#fff;font-size:6px;font-weight:bold;text-align:center;line-height:10px">1</div><div class="a" style="left:265.5px;top:60.4px;width:17px;height:17.5px;border-radius:2px;background:#1ec37a"><svg class="a" style="left:4px;top:5px" width="9" height="7" viewBox="0 0 9 7"><path d="M1 3.6 L3.5 6 L8 1" stroke="#fff" stroke-width="1" fill="none"/></svg></div><div class="a nw" style="left:298.6px;width:60px;text-align:center;top:37px;font-size:7px;line-height:10.3px;color:#333"><br>Concept Design</div><div class="a nw" style="left:298.6px;width:60px;text-align:center;top:82.8px;font-size:7px;color:#333">19 Apr 2022</div><div class="a" style="left:320.1px;top:60.4px;width:17px;height:17.5px;border-radius:2px;background:#1ec37a"><svg class="a" style="left:4px;top:5px" width="9" height="7" viewBox="0 0 9 7"><path d="M1 3.6 L3.5 6 L8 1" stroke="#fff" stroke-width="1" fill="none"/></svg></div><div class="a nw" style="left:359.5px;width:60px;text-align:center;top:37px;font-size:7px;line-height:10.3px;color:#333">Design<br>Completion</div><div class="a nw" style="left:359.5px;width:60px;text-align:center;top:82.8px;font-size:7px;color:#333">20 May 2022</div><div class="a" style="left:383.9px;top:68.5px;width:4px;height:1.6px;background:#f0443a"></div><div class="a" style="left:374.9px;top:64.3px;width:10px;height:10px;border-radius:2px;background:#f0443a;color:#fff;font-size:6px;font-weight:bold;text-align:center;line-height:10px">1</div><div class="a" style="left:387.2px;top:60.4px;width:17px;height:17.5px;border-radius:2px;background:#1ec37a"><svg class="a" style="left:4px;top:5px" width="9" height="7" viewBox="0 0 9 7"><path d="M1 3.6 L3.5 6 L8 1" stroke="#fff" stroke-width="1" fill="none"/></svg></div><div class="a nw" style="left:420.3px;width:60px;text-align:center;top:37px;font-size:7px;line-height:10.3px;color:#333"><br>Schematic Design</div><div class="a nw" style="left:420.3px;width:60px;text-align:center;top:82.8px;font-size:7px;color:#333">29 May 2022</div><div class="a" style="left:444.7px;top:68.5px;width:4px;height:1.6px;background:#f0443a"></div><div class="a" style="left:435.7px;top:64.3px;width:10px;height:10px;border-radius:2px;background:#f0443a;color:#fff;font-size:6px;font-weight:bold;text-align:center;line-height:10px">1</div><div class="a" style="left:448.0px;top:60.4px;width:17px;height:17.5px;border-radius:2px;background:#1ec37a"><svg class="a" style="left:4px;top:5px" width="9" height="7" viewBox="0 0 9 7"><path d="M1 3.6 L3.5 6 L8 1" stroke="#fff" stroke-width="1" fill="none"/></svg></div><div class="a nw" style="left:481.1px;width:60px;text-align:center;top:37px;font-size:7px;line-height:10.3px;color:#333"><br>Detailed Design</div><div class="a nw" style="left:481.1px;width:60px;text-align:center;top:82.8px;font-size:7px;color:#333">30 May 2022</div><div class="a" style="left:512.8px;top:68.5px;width:4px;height:1.6px;background:#4caf50"></div><div class="a" style="left:515.8px;top:64.3px;width:10px;height:10px;border-radius:2px;background:#4caf50;color:#fff;font-size:6px;font-weight:bold;text-align:center;line-height:10px">1</div><div class="a" style="left:496.5px;top:60.4px;width:17px;height:17.5px;border-radius:2px;background:#1ec37a"><svg class="a" style="left:4px;top:5px" width="9" height="7" viewBox="0 0 9 7"><path d="M1 3.6 L3.5 6 L8 1" stroke="#fff" stroke-width="1" fill="none"/></svg></div><div class="a nw" style="left:541.9px;width:60px;text-align:center;top:37px;font-size:7px;line-height:10.3px;color:#333">Design<br>Consultants RFT</div><div class="a nw" style="left:541.9px;width:60px;text-align:center;top:82.8px;font-size:7px;color:#333">1 Jul 2022</div><div class="a" style="left:566.3px;top:68.5px;width:4px;height:1.6px;background:#f0443a"></div><div class="a" style="left:557.3px;top:64.3px;width:10px;height:10px;border-radius:2px;background:#f0443a;color:#fff;font-size:6px;font-weight:bold;text-align:center;line-height:10px">5</div><div class="a" style="left:569.6px;top:60.4px;width:17px;height:17.5px;border-radius:2px;background:#87cdf0"></div><div class="a nw" style="left:602.7px;width:60px;text-align:center;top:37px;font-size:7px;line-height:10.3px;color:#333">Construction<br>Commenced</div><div class="a nw" style="left:602.7px;width:60px;text-align:center;top:82.8px;font-size:7px;color:#333">5 Jul 2022</div><div class="a" style="left:624.2px;top:60.4px;width:17px;height:17.5px;border-radius:2px;background:#fff;border:1.5px solid #9fd6f6"></div><div class="a nw" style="left:663.5px;width:60px;text-align:center;top:37px;font-size:7px;line-height:10.3px;color:#333"><br>Site Mobilisation</div><div class="a nw" style="left:663.5px;width:60px;text-align:center;top:82.8px;font-size:7px;color:#333">10 Aug 2022</div><div class="a" style="left:685.0px;top:60.4px;width:17px;height:17.5px;border-radius:2px;background:#fff;border:1.5px solid #9fd6f6"></div><div class="a nw" style="left:724.3px;width:60px;text-align:center;top:37px;font-size:7px;line-height:10.3px;color:#333"><br>Early Works</div><div class="a nw" style="left:724.3px;width:60px;text-align:center;top:82.8px;font-size:7px;color:#333">1 Sep 2023</div><div class="a" style="left:745.8px;top:60.4px;width:17px;height:17.5px;border-radius:2px;background:#fff;border:1.5px solid #9fd6f6"></div><div class="a nw" style="left:785.1px;width:60px;text-align:center;top:37px;font-size:7px;line-height:10.3px;color:#333"><br>Main Works</div><div class="a nw" style="left:785.1px;width:60px;text-align:center;top:82.8px;font-size:7px;color:#333">1 Sep 2024</div><div class="a" style="left:806.6px;top:60.4px;width:17px;height:17.5px;border-radius:2px;background:#fff;border:1.5px solid #9fd6f6"></div><div class="a nw" style="left:845.9px;width:60px;text-align:center;top:37px;font-size:7px;line-height:10.3px;color:#333"><br>Completion</div><div class="a nw" style="left:845.9px;width:60px;text-align:center;top:82.8px;font-size:7px;color:#333">1 Sep 2025</div><div class="a" style="left:867.4px;top:60.4px;width:17px;height:17.5px;border-radius:2px;background:#fff;border:1.5px solid #9fd6f6"></div><div class="a nw" style="left:906.7px;width:60px;text-align:center;top:37px;font-size:7px;line-height:10.3px;color:#333"><br>HOTO Complete</div><div class="a nw" style="left:906.7px;width:60px;text-align:center;top:82.8px;font-size:7px;color:#333">15 Nov 2025</div><div class="a" style="left:928.2px;top:60.4px;width:17px;height:17.5px;border-radius:2px;background:#fff;border:1.5px solid #9fd6f6"></div><div class="a nw" style="left:967.6px;width:60px;text-align:center;top:37px;font-size:7px;line-height:10.3px;color:#333"><br>End of DLP</div><div class="a nw" style="left:967.6px;width:60px;text-align:center;top:82.8px;font-size:7px;color:#333">15 Nov 2026</div><div class="a" style="left:989.1px;top:60.4px;width:17px;height:17.5px;border-radius:2px;background:#fff;border:1.5px solid #9fd6f6"></div><div class="a nw" style="left:1028.4px;width:60px;text-align:center;top:37px;font-size:7px;line-height:10.3px;color:#333"><br>Financial Close</div><div class="a nw" style="left:1028.4px;width:60px;text-align:center;top:82.8px;font-size:7px;color:#333">15 Dec 2026</div><div class="a" style="left:1049.9px;top:60.4px;width:17px;height:17.5px;border-radius:2px;background:#fff;border:1.5px solid #9fd6f6"></div><div class="a" style="left:55.5px;top:105.3px;width:59.3px;height:2.6px;background:#5ec2ee"></div><div class="a nw" style="left:55.5px;width:59.3px;text-align:center;top:108.5px;font-size:10px;letter-spacing:-0.2px;color:#424242">Inception</div><div class="a" style="left:116.8px;top:105.3px;width:484.5px;height:2.6px;background:#5ec2ee"></div><div class="a nw" style="left:116.8px;width:484.5px;text-align:center;top:108.5px;font-size:10px;letter-spacing:-0.2px;color:#424242">Design</div><div class="a" style="left:603.3px;top:105.3px;width:302.1px;height:2.6px;background:#5ec2ee"></div><div class="a nw" style="left:603.3px;width:302.1px;text-align:center;top:108.5px;font-size:10px;letter-spacing:-0.2px;color:#424242">Construction</div><div class="a" style="left:907.3px;top:105.3px;width:119.6px;height:2.6px;background:#5ec2ee"></div><div class="a nw" style="left:907.3px;width:119.6px;text-align:center;top:108.5px;font-size:10px;letter-spacing:-0.2px;color:#424242">DLP</div><div class="a" style="left:1029.0px;top:105.3px;width:58.8px;height:2.6px;background:#5ec2ee"></div><div class="a nw" style="left:1029.0px;width:58.8px;text-align:center;top:108.5px;font-size:10px;letter-spacing:-0.2px;color:#424242">Closed</div><div class="a" style="left:1090px;top:30px;width:8.5px;height:94px;background:#f1f1f1"></div><div class="a" style="left:1090.5px;top:39px;width:7.5px;height:68px;background:#c1c1c1"></div><div class="a" style="left:1092px;top:33px;width:0;height:0;border-left:2.5px solid transparent;border-right:2.5px solid transparent;border-bottom:2.5px solid #a3a3a3"></div><div class="a" style="left:1092px;top:117.5px;width:0;height:0;border-left:2.5px solid transparent;border-right:2.5px solid transparent;border-top:3px solid #505050"></div>
    <div class="rh"></div>
  </div>
  <!-- row 4 -->
  <div class="tile" style="left:122px;top:591.5px;width:1106px;height:120px" id="phases">
    <svg class="a" style="left:0;top:0" width="1106" height="100" viewBox="0 0 1106 100">
<g stroke="#e4e4e4" stroke-width="1" fill="none">
<path d="M69.2 24.2 H1099"/><path d="M69.2 63.4 H1099"/>
<path d="M73.2 24.2 V66.4" /><path d="M91.8 24.2 V66.4" /><path d="M108.7 24.2 V66.4" /><path d="M127.3 24.2 V66.4" /><path d="M145.4 24.2 V66.4" /><path d="M164.0 24.2 V66.4" /><path d="M182.1 24.2 V66.4" /><path d="M200.7 24.2 V66.4" /><path d="M219.4 24.2 V66.4" /><path d="M237.4 24.2 V66.4" /><path d="M256.1 24.2 V66.4" /><path d="M274.1 24.2 V66.4" /><path d="M292.8 24.2 V66.4" /><path d="M311.4 24.2 V66.4" /><path d="M328.9 24.2 V66.4" /><path d="M347.5 24.2 V66.4" /><path d="M365.6 24.2 V66.4" /><path d="M384.2 24.2 V66.4" /><path d="M402.3 24.2 V66.4" /><path d="M420.9 24.2 V66.4" /><path d="M439.6 24.2 V66.4" /><path d="M457.6 24.2 V66.4" /><path d="M476.3 24.2 V66.4" /><path d="M494.3 24.2 V66.4" /><path d="M513.0 24.2 V66.4" /><path d="M531.6 24.2 V66.4" /><path d="M548.5 24.2 V66.4" /><path d="M567.1 24.2 V66.4" /><path d="M585.2 24.2 V66.4" /><path d="M603.8 24.2 V66.4" /><path d="M621.9 24.2 V66.4" /><path d="M640.5 24.2 V66.4" /><path d="M659.2 24.2 V66.4" /><path d="M677.2 24.2 V66.4" /><path d="M695.9 24.2 V66.4" /><path d="M713.9 24.2 V66.4" /><path d="M732.6 24.2 V66.4" /><path d="M751.2 24.2 V66.4" /><path d="M768.0 24.2 V66.4" /><path d="M786.7 24.2 V66.4" /><path d="M804.7 24.2 V66.4" /><path d="M823.4 24.2 V66.4" /><path d="M841.4 24.2 V66.4" /><path d="M860.1 24.2 V66.4" /><path d="M878.7 24.2 V66.4" /><path d="M896.8 24.2 V66.4" /><path d="M915.4 24.2 V66.4" /><path d="M933.5 24.2 V66.4" /><path d="M952.1 24.2 V66.4" /><path d="M970.8 24.2 V66.4" /><path d="M987.6 24.2 V66.4" /><path d="M1006.3 24.2 V66.4" /><path d="M1024.3 24.2 V66.4" /><path d="M1043.0 24.2 V66.4" /><path d="M1061.0 24.2 V66.4" /><path d="M1079.7 24.2 V66.4" />
</g>
<rect x="73.8" y="30.5" width="629.9" height="26.5" fill="#fdc878"/>
<rect x="706.6" y="30.5" width="235.3" height="26.5" fill="#f7626c"/>
<g font-family="Liberation Sans" font-size="7">
<text x="65.6" y="45.3" text-anchor="end" fill="#555">Sandbox Project 1</text>
<text x="77.7" y="45" font-weight="bold" fill="#5b4a35">Construction</text>
<text x="709.8" y="44.6" font-weight="bold" fill="#fff">DLP</text>
</g>
<rect x="355.3" y="24.3" width="2.2" height="39" fill="#1e3046"/>
<text x="357.4" y="26" font-family="Liberation Sans" font-size="5.8" font-weight="bold" fill="#1e3046" letter-spacing="0.2">TODAY</text>
<g font-family="Liberation Sans" font-size="7" fill="#7a7a7a" text-anchor="end">
<text transform="translate(76.7 72.3) rotate(-33)">Jan '23</text><text transform="translate(95.3 72.3) rotate(-33)">Feb '23</text><text transform="translate(112.2 72.3) rotate(-33)">Mar '23</text><text transform="translate(130.8 72.3) rotate(-33)">Apr '23</text><text transform="translate(148.9 72.3) rotate(-33)">May '23</text><text transform="translate(167.5 72.3) rotate(-33)">Jun '23</text><text transform="translate(185.6 72.3) rotate(-33)">Jul '23</text><text transform="translate(204.2 72.3) rotate(-33)">Aug '23</text><text transform="translate(222.9 72.3) rotate(-33)">Sep '23</text><text transform="translate(240.9 72.3) rotate(-33)">Oct '23</text><text transform="translate(259.6 72.3) rotate(-33)">Nov '23</text><text transform="translate(277.6 72.3) rotate(-33)">Dec '23</text><text transform="translate(296.3 72.3) rotate(-33)">Jan '24</text><text transform="translate(314.9 72.3) rotate(-33)">Feb '24</text><text transform="translate(332.4 72.3) rotate(-33)">Mar '24</text><text transform="translate(351.0 72.3) rotate(-33)">Apr '24</text><text transform="translate(369.1 72.3) rotate(-33)">May '24</text><text transform="translate(387.7 72.3) rotate(-33)">Jun '24</text><text transform="translate(405.8 72.3) rotate(-33)">Jul '24</text><text transform="translate(424.4 72.3) rotate(-33)">Aug '24</text><text transform="translate(443.1 72.3) rotate(-33)">Sep '24</text><text transform="translate(461.1 72.3) rotate(-33)">Oct '24</text><text transform="translate(479.8 72.3) rotate(-33)">Nov '24</text><text transform="translate(497.8 72.3) rotate(-33)">Dec '24</text><text transform="translate(516.5 72.3) rotate(-33)">Jan '25</text><text transform="translate(535.1 72.3) rotate(-33)">Feb '25</text><text transform="translate(552.0 72.3) rotate(-33)">Mar '25</text><text transform="translate(570.6 72.3) rotate(-33)">Apr '25</text><text transform="translate(588.7 72.3) rotate(-33)">May '25</text><text transform="translate(607.3 72.3) rotate(-33)">Jun '25</text><text transform="translate(625.4 72.3) rotate(-33)">Jul '25</text><text transform="translate(644.0 72.3) rotate(-33)">Aug '25</text><text transform="translate(662.7 72.3) rotate(-33)">Sep '25</text><text transform="translate(680.7 72.3) rotate(-33)">Oct '25</text><text transform="translate(699.4 72.3) rotate(-33)">Nov '25</text><text transform="translate(717.4 72.3) rotate(-33)">Dec '25</text><text transform="translate(736.1 72.3) rotate(-33)">Jan '26</text><text transform="translate(754.7 72.3) rotate(-33)">Feb '26</text><text transform="translate(771.5 72.3) rotate(-33)">Mar '26</text><text transform="translate(790.2 72.3) rotate(-33)">Apr '26</text><text transform="translate(808.2 72.3) rotate(-33)">May '26</text><text transform="translate(826.9 72.3) rotate(-33)">Jun '26</text><text transform="translate(844.9 72.3) rotate(-33)">Jul '26</text><text transform="translate(863.6 72.3) rotate(-33)">Aug '26</text><text transform="translate(882.2 72.3) rotate(-33)">Sep '26</text><text transform="translate(900.3 72.3) rotate(-33)">Oct '26</text><text transform="translate(918.9 72.3) rotate(-33)">Nov '26</text><text transform="translate(937.0 72.3) rotate(-33)">Dec '26</text><text transform="translate(955.6 72.3) rotate(-33)">Jan '27</text><text transform="translate(974.3 72.3) rotate(-33)">Feb '27</text><text transform="translate(991.1 72.3) rotate(-33)">Mar '27</text><text transform="translate(1009.8 72.3) rotate(-33)">Apr '27</text><text transform="translate(1027.8 72.3) rotate(-33)">May '27</text><text transform="translate(1046.5 72.3) rotate(-33)">Jun '27</text><text transform="translate(1064.5 72.3) rotate(-33)">Jul '27</text><text transform="translate(1083.2 72.3) rotate(-33)">Aug '27</text>
</g>
<path d="M611.4 36.2 Q611.4 34.2 613.4 34.2 H698.3 Q700.3 34.2 700.3 36.2 V41.5 L703.2 43.7 L700.3 45.9 V51.2 Q700.3 53.2 698.3 53.2 H613.4 Q611.4 53.2 611.4 51.2 Z" fill="#352b1c" stroke="#594a36" stroke-width="0.6"/>
<rect x="615.3" y="37.5" width="6.3" height="5" fill="#fdc878" stroke="#fff" stroke-width="0.5"/>
<g font-family="Liberation Sans" font-size="6.3" font-weight="bold" fill="#fff">
<text x="623" y="42">Construction</text>
<text x="616" y="48.8">1 Jan 2023 - 14 Nov 2025</text>
</g>
</svg>
    <div class="tt">Project Phases</div>
  </div>
  <!-- outer scrollbar -->
  <div class="a" style="left:1337px;top:183px;width:17px;height:496px;background:#f1f1f1"></div>
  <div class="a" style="left:1342px;top:190px;width:0;height:0;border-left:3.5px solid transparent;border-right:3.5px solid transparent;border-bottom:4px solid #a3a3a3"></div>
  <div class="a" style="left:1339px;top:200px;width:13px;height:172px;background:#c1c1c1"></div>
  <div class="a" style="left:1342px;top:668px;width:0;height:0;border-left:3.5px solid transparent;border-right:3.5px solid transparent;border-top:4px solid #505050"></div>
</div>
<svg class="a" style="left:1288px;top:438px" width="16" height="22" viewBox="0 0 16 22"><path d="M1.5 1.5 V17.2 L5.2 13.6 L8.2 19.8 L10.6 18.8 L7.8 12.7 H12.6 Z" fill="#fff" stroke="#111" stroke-width="1.1" stroke-linejoin="round"/></svg>
</body></html>
